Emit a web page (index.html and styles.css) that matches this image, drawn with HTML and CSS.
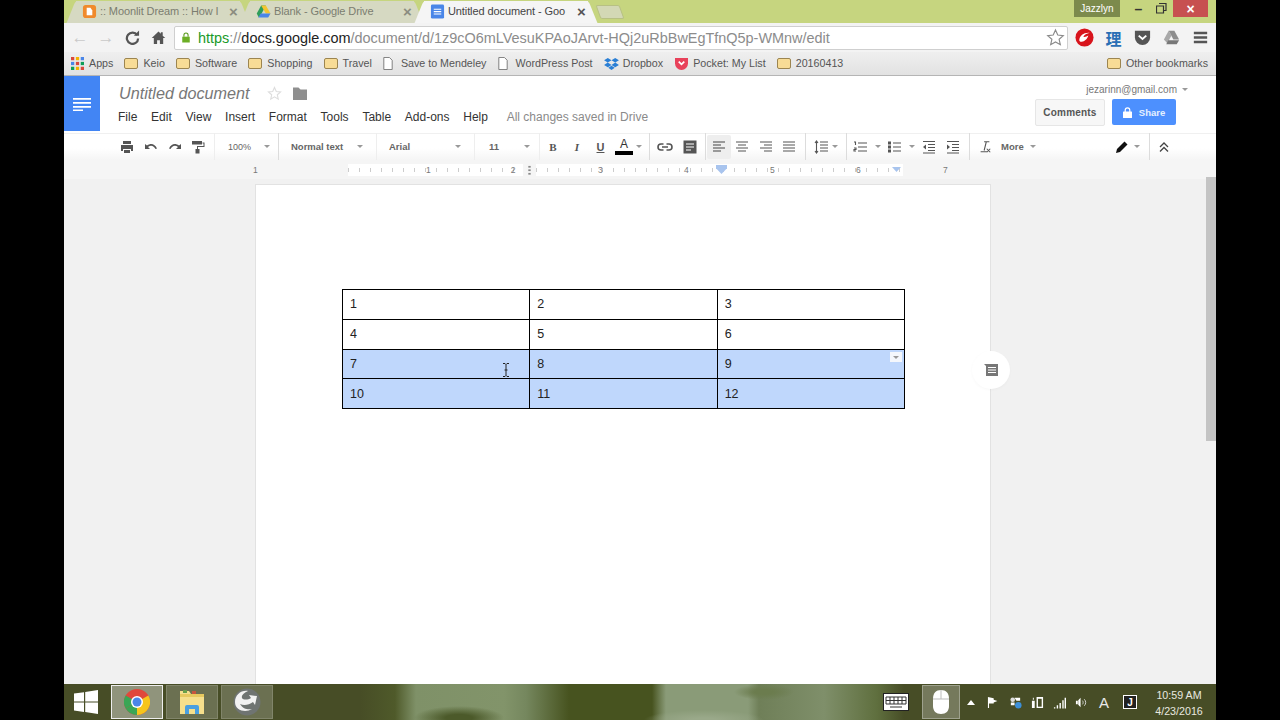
FILE: index.html
```html
<!DOCTYPE html>
<html lang="en">
<head>
<meta charset="utf-8">
<title>Untitled document - Google Docs</title>
<link rel="stylesheet" href="styles.css">
</head>
<body>
<div class="screen">
  <div class="tabstrip">
    <div class="tab">
      <svg class="ico16" viewBox="0 0 16 16"><rect x="1" y="1" width="14" height="14" rx="3" fill="#f08a2c"/><path d="M5 4h4l2 3v5H5z" fill="#fff"/></svg>
      <span class="tabtext">:: Moonlit Dream :: How I</span><span class="tabx">×</span>
    </div>
    <div class="tab">
      <svg class="ico16" viewBox="0 0 16 16"><path d="M5.500 1.500h5L6 10 3 14.500 0.800 10z" fill="#2f9e5a"/><path d="M5.500 1.500h5l5 8.500h-5z" fill="#f4c430"/><path d="M5 10h10.500l-2.500 4.500H2.500z" fill="#4a86e8"/></svg>
      <span class="tabtext">Blank - Google Drive</span><span class="tabx">×</span>
    </div>
    <div class="tab active">
      <svg class="ico16" viewBox="0 0 16 16"><rect x="1" y="0.500" width="14" height="15" rx="1.500" fill="#4a86e8"/><path d="M4 5h8v1.200H4zM4 7.500h8v1.200H4zM4 10h8v1.200H4z" fill="#fff"/></svg>
      <span class="tabtext">Untitled document - Goo</span><span class="tabx dark">×</span>
    </div>
    <div class="newtab"></div>
    <div class="winctl">
      <span class="user">Jazzlyn</span>
      <span class="wbtn">–</span>
      <span class="wbtn"><svg width="11" height="11" viewBox="0 0 11 11"><path d="M3 .5h7v7H8M.5 3h7v7h-7z" fill="none" stroke="#333" stroke-width="1.200"/></svg></span>
      <span class="wbtn close">×</span>
    </div>
  </div>

  <div class="navbar">
    <span class="nav faint">←</span>
    <span class="nav faint">→</span>
    <svg class="navi" viewBox="0 0 16 16"><path d="M13 5.500A6 6 0 1 0 14 9" fill="none" stroke="#555" stroke-width="2.400"/><path d="M9.500 6H15V.5z" fill="#555"/></svg>
    <svg class="navi" viewBox="0 0 16 16"><path d="M8 1.500 0.800 8.500H3V15h3.500v-4h3v4H13V8.500h2.200L12.500 6V2.500h-2v1.600z" fill="#555"/></svg>
    <div class="omni">
      <svg class="lock" viewBox="0 0 12 14"><path d="M3.500 6V4a2.500 2.500 0 0 1 5 0v2" fill="none" stroke="#5b9a1f" stroke-width="1.300"/><rect x="1.500" y="6" width="9" height="7" fill="#6cae25"/></svg>
      <span class="url"><span class="https">https</span><span class="muted">://</span>docs.google.com<span class="muted">/document/d/1z9cO6mLVesuKPAoJArvt-HQj2uRbBwEgTfnQ5p-WMnw/edit</span></span>
      <svg class="star" viewBox="0 0 20 20"><path d="M10 2l2.400 5.400 5.800.6-4.400 3.900 1.300 5.700L10 14.700l-5.100 2.900 1.300-5.700L1.800 8l5.800-.6z" fill="#fff" stroke="#8a8a8a" stroke-width="1.200"/></svg>
    </div>
    <div class="exts">
      <svg class="ext" viewBox="0 0 20 20"><circle cx="10" cy="10" r="9.500" fill="#d8141c"/><path d="M4.500 12.500C5 8 9 4.500 15.500 5c-3 .8-6 2.300-6.800 4.300 1.800.5 3.800-.3 5.300-1.300-.8 3.700-4.500 7-7.500 6.500-1.200-.2-2-1-2-2z" fill="#fff"/></svg>
      <span class="kanji">理</span>
      <svg class="ext" viewBox="0 0 20 20"><path d="M2 3h16v7a8 8 0 0 1-16 0z" fill="#555"/><path d="M6 8l4 3.500L14 8" fill="none" stroke="#fff" stroke-width="2"/></svg>
      <svg class="ext" viewBox="0 0 20 20"><path d="M7 3h6l5 9h-6z" fill="#8d8d8d"/><path d="M7 3l3 5-4.500 8L2 12z" fill="#a8a8a8"/><path d="M6.500 13H18l-2.500 4H4.500z" fill="#777"/></svg>
      <svg class="ext" viewBox="0 0 20 20"><path d="M3 4h14v2.600H3zM3 8.700h14v2.600H3zM3 13.400h14V16H3z" fill="#555"/></svg>
    </div>
  </div>

  <div class="bookmarks">
    <span class="bm"><svg class="ico14" viewBox="0 0 12 12"><g><rect x="0" y="0" width="3" height="3" fill="#d9483b"/><rect x="4.500" y="0" width="3" height="3" fill="#f4b400"/><rect x="9" y="0" width="3" height="3" fill="#4a86e8"/><rect x="0" y="4.500" width="3" height="3" fill="#4a86e8"/><rect x="4.500" y="4.500" width="3" height="3" fill="#d9483b"/><rect x="9" y="4.500" width="3" height="3" fill="#0f9d58"/><rect x="0" y="9" width="3" height="3" fill="#0f9d58"/><rect x="4.500" y="9" width="3" height="3" fill="#f4b400"/><rect x="9" y="9" width="3" height="3" fill="#d9483b"/></g></svg>Apps</span>
    <span class="bm"><i class="folder"></i>Keio</span>
    <span class="bm"><i class="folder"></i>Software</span>
    <span class="bm"><i class="folder"></i>Shopping</span>
    <span class="bm"><i class="folder"></i>Travel</span>
    <span class="bm"><svg class="pageic" viewBox="0 0 10 14"><path d="M.5.500h6l3 3v10H.5z" fill="#fff" stroke="#777"/></svg>Save to Mendeley</span>
    <span class="bm"><svg class="pageic" viewBox="0 0 10 14"><path d="M.5.500h6l3 3v10H.5z" fill="#fff" stroke="#777"/></svg>WordPress Post</span>
    <span class="bm"><svg class="ico14 wide" viewBox="0 0 16 14"><path d="M4 1l4 2.500L4 6 0 3.500zM12 1l4 2.500L12 6 8 3.500zM4 6l4 2.500L4 11 0 8.500zM12 6l4 2.500L12 11 8 8.500zM4.500 11.500 8 9.500l3.500 2L8 14z" fill="#2a7fd5"/></svg>Dropbox</span>
    <span class="bm"><svg class="ico14 wide" viewBox="0 0 16 14"><path d="M1 1h14v6a7 7 0 0 1-14 0z" fill="#e8415a"/><path d="M5 5l3 3 3-3" fill="none" stroke="#fff" stroke-width="1.800"/></svg>Pocket: My List</span>
    <span class="bm"><i class="folder"></i>20160413</span>
    <span class="bm other"><i class="folder"></i>Other bookmarks</span>
  </div>

  <div class="docs">
    <header class="dochead">
      <div class="logo"><svg width="18" height="14" viewBox="0 0 18 14"><path d="M0 1h18v1.800H0zM0 5h18v1.800H0zM0 9h18v1.800H0zM0 12.600h10V14H0z" fill="#fff"/></svg></div>
      <div class="titles">
        <div class="titlerow">
          <span class="doctitle">Untitled document</span>
          <svg class="tstar" viewBox="0 0 16 16"><path d="M8 1.500l1.900 4.300 4.600.5-3.500 3.100 1 4.600L8 11.600l-4 2.400 1-4.600-3.500-3.100 4.600-.5z" fill="none" stroke="#ddd" stroke-width="1.200"/></svg>
          <svg class="tfolder" viewBox="0 0 14 13"><path d="M0 .5h5.500L7.500 2.500H14V13H0z" fill="#8f8f8f"/></svg>
        </div>
        <nav class="menu">
          <span>File</span><span>Edit</span><span>View</span><span>Insert</span><span>Format</span><span>Tools</span><span>Table</span><span>Add-ons</span><span>Help</span>
          <span class="saved">All changes saved in Drive</span>
        </nav>
      </div>
      <div class="acct">
        <div class="email">jezarinn@gmail.com <i class="caret"></i></div>
        <div class="btns">
          <span class="comments">Comments</span>
          <span class="share"><svg width="9" height="11" viewBox="0 0 9 11"><path d="M2.200 5V3.200a2.300 2.300 0 0 1 4.600 0V5" fill="none" stroke="#fff" stroke-width="1.200"/><rect y="4.500" width="9" height="6.500" rx=".5" fill="#fff"/></svg>Share</span>
        </div>
      </div>
    </header>

    <div class="toolbar">
      <svg class="tb" viewBox="0 0 14 14"><path d="M3 1h8v3H3zM1 5h12v6h-2V9H3v2H1zM4 10h6v3H4z" fill="#555"/></svg>
      <svg class="tb ml10" viewBox="0 0 14 14"><path d="M1 4v5h5L4 7c3-2.500 6-1 7.500 2l1.500-.5C11 4 7 2.500 3 5.500z" fill="#555"/></svg>
      <svg class="tb ml10" viewBox="0 0 14 14"><path d="M13 4v5H8l2-2C7 4.500 4 6 2.500 9L1 8.500C3 4 7 2.500 11 5.500z" fill="#555"/></svg>
      <svg class="tb ml9" viewBox="0 0 14 14"><path d="M1 1h10v3.500H1zM11.500 2.500H13.500V7H7v2H8.500v4.500h-4V9H6V6h6.500V3.500h-1z" fill="#555"/></svg>
      <i class="sep ml9 faint"></i>
      <span class="sel zoom">100%<i class="caret"></i></span>
      <i class="sep"></i>
      <span class="sel stylebox">Normal text<i class="caret"></i></span>
      <i class="sep faint"></i>
      <span class="sel fontbox">Arial<i class="caret"></i></span>
      <i class="sep faint"></i>
      <span class="sel sizebox">11<i class="caret"></i></span>
      <i class="sep faint"></i>
      <span class="fmt b ml1">B</span><span class="fmt it">I</span><span class="fmt u">U</span>
      <span class="fmt color">A<i class="colorbar"></i></span><i class="caret ml1"></i>
      <i class="sep ml7"></i>
      <svg class="tb link ml7" viewBox="0 0 16 14"><path d="M6.500 4H4a3 3 0 0 0 0 6h2.500M9.500 4H12a3 3 0 0 1 0 6H9.500M5 7h6" fill="none" stroke="#555" stroke-width="1.600"/></svg>
      <svg class="tb ml10" viewBox="0 0 14 14"><path d="M.5.500h13v13H.5z" fill="#555"/><path d="M3 4h8M3 7h8M3 10h5" stroke="#fff" stroke-width="1.200"/></svg>
      <i class="sep ml8"></i>
      <span class="alignbtn on ml1"><svg class="tb" viewBox="0 0 14 14"><path d="M1 2h12M1 5h8M1 8h12M1 11h8" stroke="#444" stroke-width="1.200"/></svg></span>
      <span class="alignbtn"><svg class="tb" viewBox="0 0 14 14"><path d="M1 2h12M3 5h8M1 8h12M3 11h8" stroke="#555" stroke-width="1.200"/></svg></span>
      <span class="alignbtn"><svg class="tb" viewBox="0 0 14 14"><path d="M1 2h12M5 5h8M1 8h12M5 11h8" stroke="#555" stroke-width="1.200"/></svg></span>
      <span class="alignbtn"><svg class="tb" viewBox="0 0 14 14"><path d="M1 2h12M1 5h12M1 8h12M1 11h12" stroke="#555" stroke-width="1.200"/></svg></span>
      <i class="sep ml4"></i>
      <svg class="tb ml8" viewBox="0 0 14 14"><path d="M2.500 1v12M1 3l1.500-2L4 3M1 11l1.500 2L4 11M6 2h8M6 5h8M6 8h8M6 11h8" fill="none" stroke="#555" stroke-width="1.100"/></svg><i class="caret ml4"></i>
      <i class="sep ml8"></i>
      <svg class="tb ml6" viewBox="0 0 14 14"><path d="M1 2h1.500v3M1 8h2v1.500H1V11h2M5 3h9M5 7h9M5 11h9" fill="none" stroke="#555" stroke-width="1.100"/></svg><i class="caret ml8"></i>
      <svg class="tb ml6" viewBox="0 0 14 14"><path d="M1 1.500h3v3H1zM1 5.500h3v3H1zM1 9.500h3v3H1z" fill="#555"/><path d="M6 3h8M6 7h8M6 11h8" stroke="#555" stroke-width="1.100"/></svg><i class="caret ml8"></i>
      <svg class="tb ml7" viewBox="0 0 14 14"><path d="M1 1.500h12M6 4.500h7M6 7.500h7M6 10.500h7M1 13h12" stroke="#555" stroke-width="1.100"/><path d="M4 4.500v5L1 7z" fill="#555"/></svg>
      <svg class="tb ml10" viewBox="0 0 14 14"><path d="M1 1.500h12M6 4.500h7M6 7.500h7M6 10.500h7M1 13h12" stroke="#555" stroke-width="1.100"/><path d="M1 4.500v5L4 7z" fill="#555"/></svg>
      <i class="sep ml9"></i>
      <svg class="tb ml8" viewBox="0 0 16 14"><path d="M7 1h6M9.500 1 7 11M3 12.500h7M10 9l4 4M14 9l-4 4" fill="none" stroke="#555" stroke-width="1.200"/></svg>
      <span class="sel more ml9">More<i class="caret"></i></span>
      <span class="grow"></span>
      <svg class="tb" viewBox="0 0 14 14"><path d="M1 13l1-4 7.500-7.500 3 3L5 12z" fill="#111"/></svg><i class="caret ml5"></i>
      <i class="sep ml9"></i>
      <svg class="tb chev ml8" viewBox="0 0 12 12"><path d="M2 6l4-4 4 4M2 10.500l4-4 4 4" fill="none" stroke="#444" stroke-width="1.300"/></svg>
    </div>

    <div class="ruler">
      <span class="rn outer">1</span>
      <div class="rstrip a"><span>1</span><span>2</span></div>
      <i class="rdots"></i>
      <div class="rstrip b"><span>3</span><span>4</span><i class="indent"></i><span>5</span><span>6</span><i class="rmark"></i></div>
      <span class="rn seven">7</span>
    </div>

    <div class="canvas">
      <main class="page">
        <table class="grid">
          <tr><td>1</td><td>2</td><td>3</td></tr>
          <tr><td>4</td><td>5</td><td>6</td></tr>
          <tr class="hl"><td>7</td><td>8</td><td>9</td></tr>
          <tr class="hl"><td>10</td><td>11</td><td>12</td></tr>
        </table>
      </main>
      <div class="scroll"><div class="thumb"></div></div>
      <svg class="ibeam" viewBox="0 0 8 14"><path d="M1 .5h2l1 1 1-1h2M4 1.500v11M1 13.500h2l1-1 1 1h2M2.500 7h3" fill="none" stroke="#222"/></svg>
      <span class="celltag"><i class="caret"></i></span>
      <div class="bubble"><svg width="14" height="12" viewBox="0 0 14 12"><path d="M0 0h14v12H2V2z" fill="#777"/><path d="M4 3.500h8M4 6h8M4 8.500h8" stroke="#fff"/></svg></div>
    </div>
  </div>

  <footer class="taskbar">
    <svg class="win" viewBox="0 0 24 24"><path d="M0 3.600 10 2.200v9.200H0zM11.200 2 24 0v11.400H11.200zM0 12.600h10v9.300L0 20.400zM11.200 12.600H24V24l-12.800-1.900z" fill="#fff"/></svg>
    <div class="tbtn active"><svg width="26" height="26" viewBox="0 0 26 26"><circle cx="13" cy="13" r="13" fill="#e0483b"/><path d="M13 13 1.700 19.500A13 13 0 0 0 13 26z" fill="#3aa655"/><path d="M13 13V26A13 13 0 0 0 24.300 6.500z" fill="#f6c51c"/><path d="M13 13 1.700 19.500A13 13 0 0 1 1.700 6.500z" fill="#3aa655"/><circle cx="13" cy="13" r="6" fill="#fff"/><circle cx="13" cy="13" r="4.500" fill="#4a86e8"/></svg></div>
    <div class="tbtn"><svg width="30" height="28" viewBox="0 0 30 28"><path d="M3 3h9l2 3h13v20H3z" fill="#f6df8c"/><path d="M3 6h24v3H3z" fill="#e7c95f"/><rect x="6" y="2" width="4" height="3" fill="#6aa04a"/><rect x="15" y="3" width="4" height="3" fill="#c8553d"/><path d="M8 26v-7a2 2 0 0 1 2-2h10a2 2 0 0 1 2 2v7h-4v-5h-6v5z" fill="#4a9fe0"/></svg></div>
    <div class="tbtn"><svg width="28" height="28" viewBox="0 0 28 28"><circle cx="14" cy="14" r="13.500" fill="#6f7472"/><path d="M2 14C2 7 8 2 15 3c-4 2-7 4-6 7 1 2 6 2 9 0l-2-3 8 1-2 9-2-3c-4 3-9 4-13 2 3 5 8 6 12 5-6 4-17 2-17-7z" fill="#f2f2f2"/></svg></div>
    <span class="grow"></span>
    <svg class="kbd" width="26" height="18" viewBox="0 0 26 18"><rect x=".5" y=".5" width="25" height="17" fill="#fff" stroke="#222"/><path d="M3 4h20v7H3zM3 7.500h20M7 4v7M11 4v7M15 4v7M19 4v7M7 14h12" fill="none" stroke="#333"/></svg>
    <div class="mouse"><svg width="16" height="24" viewBox="0 0 16 24"><path d="M8 0c5 0 8 3 8 9v7c0 5-3 8-8 8s-8-3-8-8V9c0-6 3-9 8-9z" fill="#fff"/><path d="M0 9h16M8 0v9" stroke="#bbb"/></svg></div>
    <div class="tray">
      <svg class="tr up" viewBox="0 0 8 5"><path d="M4 0l4 5H0z" fill="#fff"/></svg>
      <svg class="tr" viewBox="0 0 14 14"><path d="M1 1v12h1.200V8h5V7l4-1.500L7.200 4V2.500z" fill="#fff"/></svg>
      <svg class="tr" viewBox="0 0 14 14"><circle cx="4" cy="4" r="2.500" fill="#ddd"/><circle cx="10" cy="10" r="3.500" fill="#3c8fd8"/><path d="M6 2h6v3H8zM2 7h4v3H2z" fill="#fff"/></svg>
      <svg class="tr" viewBox="0 0 14 14"><path d="M6 1h7v12H6zM1 5h3v8H1zM2 2h1v2H2z" fill="#fff"/><path d="M7.500 3h4v8.500h-4z" fill="#474d26"/></svg>
      <svg class="tr" viewBox="0 0 14 14"><path d="M1 12h1.500v1.500H1zM4 10h1.500v3.500H4zM7 7.500h1.500v6H7zM10 4.500h1.500v9H10zM12.500 2H14v11.500h-1.500z" fill="#fff"/></svg>
      <svg class="tr" viewBox="0 0 14 14"><path d="M1 5h2v4H1zM3.500 4.500 6 2v10L3.500 9.500z" fill="#fff"/><path d="M8 5c1 1 1 3 0 4M10 3.500c2 2 2 5 0 7" fill="none" stroke="#ddd"/></svg>
      <span class="ime">A</span>
      <span class="jbox">J</span>
    </div>
    <div class="clock"><span>10:59 AM</span><span>4/23/2016</span></div>
  </footer>
</div>
</body>
</html>
```

FILE: styles.css
```css
* { box-sizing: border-box; }
html, body { margin: 0; height: 100%; background: #000; overflow: hidden; }
body { font-family: "Liberation Sans", Arial, sans-serif; display: flex; justify-content: center; }
i { display: block; }

.screen { width: 1152px; height: 720px; display: flex; flex-direction: column; background: #fff; position: relative; overflow: hidden; }

/* Tabs */
.tabstrip { height: 23px; flex: none; background: #c6d57f; display: flex; align-items: flex-end; padding-left: 12px; }
.tab { width: 164px; height: 22px; background: #d6d9c2; margin-right: 10px; display: flex; align-items: center; padding: 0 0 2px 6px; font-size: 11px; color: #7b7d70; position: relative; flex: none; }
.tab::before, .tab::after { content: ""; position: absolute; top: 0; bottom: 0; width: 11px; background: inherit; }
.tab::before { left: -5px; transform: skewX(-22deg); border-radius: 3px 0 0 0; }
.tab::after { right: -5px; transform: skewX(22deg); border-radius: 0 3px 0 0; }
.tab.active { background: #f5f5f5; color: #444; z-index: 2; }
.ico16 { width: 15px; height: 15px; flex: none; margin-right: 3px; position: relative; z-index: 1; }
.tabtext { flex: 1; white-space: nowrap; overflow: hidden; position: relative; z-index: 1; letter-spacing: -.1px; }
.tabx { width: 13px; text-align: center; font-size: 15px; color: #8b8d80; font-weight: 700; line-height: 1; position: relative; z-index: 1; flex: none; }
.tabx.dark { color: #555; }
.newtab { width: 24px; height: 14px; background: #d3d8b5; margin-bottom: 4px; transform: skewX(20deg); border-radius: 2px; border: 1px solid #b7c084; }
.winctl { margin-left: auto; align-self: flex-start; display: flex; align-items: stretch; height: 17px; margin-right: 8px; }
.user { width: 46px; background: #7c8a4c; color: #fff; font-size: 10px; display: flex; align-items: center; justify-content: center; margin-right: 7px; }
.wbtn { width: 23px; display: flex; align-items: center; justify-content: center; color: #333; font-size: 14px; font-weight: 700; }
.wbtn.close { width: 35px; background: #c75050; color: #fff; }

/* Nav */
.navbar { height: 29px; flex: none; background: #f3f3f3; display: flex; align-items: center; padding-left: 3px; }
.nav { width: 26px; text-align: center; font-size: 17px; color: #555; font-weight: 700; line-height: 1; }
.nav.faint { color: #c9c9c9; }
.navi { width: 15px; height: 15px; margin-left: 6px; margin-right: 5px; flex: none; }
.omni { height: 24px; width: 894px; margin-left: 3px; background: #fff; border: 1px solid #cfcfcf; border-radius: 2px; display: flex; align-items: center; padding: 0 2px 0 6px; flex: none; }
.lock { width: 10px; height: 13px; margin-right: 7px; flex: none; }
.url { font-size: 14.450px; color: #222; flex: 1; white-space: nowrap; }
.https { color: #1a9a2a; }
.muted { color: #8c8c8c; }
.star { width: 19px; height: 19px; flex: none; }
.exts { display: flex; align-items: center; margin-left: 7px; gap: 10px; }
.ext { width: 19px; height: 19px; flex: none; }
.kanji { width: 19px; text-align: center; font-family: "Noto Sans CJK SC", sans-serif; font-size: 16px; line-height: 1; color: #2a6fb5; font-weight: 700; }

/* Bookmarks */
.bookmarks { height: 24px; flex: none; background: linear-gradient(#efefef, #e2e2e2); border-bottom: 1px solid #b5b5b5; display: flex; align-items: center; padding: 0 8px 1px 7px; font-size: 10.700px; color: #555; }
.bm { display: flex; align-items: center; margin-right: 11.100px; white-space: nowrap; }
.bm.other { margin-left: auto; margin-right: 0; }
.ico14 { width: 13px; height: 13px; margin-right: 5px; flex: none; }
.ico14.wide { width: 15px; margin-right: 4px; }
.pageic { width: 10px; height: 13px; margin-right: 8px; flex: none; }
.folder { width: 14px; height: 11px; background: #f8dc96; border: 1px solid #9c8550; border-radius: 2px; margin-right: 5px; }

/* Docs */
.docs { flex: 1; display: flex; flex-direction: column; min-height: 0; position: relative; }
.dochead { height: 57px; flex: none; display: flex; background: #fff; }
.logo { width: 36px; height: 55px; background: #4285f4; display: flex; align-items: center; justify-content: center; flex: none; }
.titles { margin-left: 18px; flex: 1; }
.titlerow { display: flex; align-items: center; height: 34px; }
.doctitle { font-size: 16.200px; font-style: italic; color: #777; margin-left: 1px; }
.tstar { width: 15px; height: 15px; margin-left: 18px; }
.tfolder { width: 14px; height: 13px; margin-left: 11px; }
.menu { display: flex; align-items: center; font-size: 12px; color: #333; height: 14px; }
.menu span { margin-right: 13.750px; }
.menu .saved { color: #8a8a8a; margin-left: 5px; }
.acct { width: 140px; margin-right: 40px; display: flex; flex-direction: column; align-items: flex-end; padding-top: 7px; flex: none; }
.email { font-size: 10px; color: #777; display: flex; align-items: center; margin-right: -12px; white-space: nowrap; height: 13px; gap: 5px; }
.btns { display: flex; gap: 7px; margin-top: 3px; }
.comments { height: 27px; width: 70px; background: #f7f7f7; border: 1px solid #e6e6e6; border-radius: 2px; font-size: 10px; font-weight: 700; color: #555; display: flex; align-items: center; justify-content: center; letter-spacing: .2px; }
.share { height: 26px; width: 64px; background: #4d90fe; border-radius: 2px; color: #e6f0ff; font-size: 9.500px; font-weight: 700; display: flex; align-items: center; justify-content: center; gap: 7px; }

.caret { width: 0; height: 0; border-left: 3px solid transparent; border-right: 3px solid transparent; border-top: 3px solid #999; flex: none; }

/* Toolbar: small left margins tune the spacing of the icon groups */
.toolbar { height: 27px; flex: none; display: flex; align-items: center; padding: 0 46px 1px 56px; font-size: 9.500px; color: #555; background: linear-gradient(#fff 0, #fff 55%, #f5f5f5 100%); border-top: 1px solid #f0f0f0; }
.ml1 { margin-left: 1px; }
.ml4 { margin-left: 4px; }
.ml5 { margin-left: 5px; }
.ml6 { margin-left: 6px; }
.ml7 { margin-left: 7px; }
.ml8 { margin-left: 8px; }
.ml9 { margin-left: 9px; }
.ml10 { margin-left: 10px; }
.tb { width: 14px; height: 14px; flex: none; }
.tb.link { width: 16px; }
.tb.chev { width: 12px; height: 12px; }
.sep { width: 1px; height: 27px; background: #dcdcdc; flex: none; }
.sep.faint { background: #eee; }
.sel { display: flex; align-items: center; justify-content: space-between; font-weight: 700; white-space: nowrap; flex: none; color: #666; }
.zoom { width: 63px; font-weight: 400; padding: 0 8px 0 13px; font-size: 9px; }
.stylebox { width: 97px; padding: 0 13px 0 12px; }
.fontbox { width: 97px; padding: 0 13px 0 12px; }
.sizebox { width: 64px; padding: 0 9px 0 14px; }
.more { width: 35px; }
.fmt { width: 24px; text-align: center; font-size: 11px; font-weight: 700; color: #555; flex: none; font-family: "Liberation Serif", serif; }
.fmt.it { font-style: italic; }
.fmt.u { text-decoration: underline; font-family: "Liberation Sans", sans-serif; width: 23px; }
.fmt.color { font-family: "Liberation Sans", sans-serif; font-weight: 400; color: #333; display: flex; flex-direction: column; align-items: center; line-height: 10px; font-size: 12px; width: 22px; margin-left: 1px; }
.colorbar { width: 18px; height: 4px; background: #000; margin-top: 2px; }
.alignbtn { width: 23.500px; height: 24px; display: flex; align-items: center; justify-content: center; flex: none; }
.alignbtn.on { background: #eee; border-radius: 2px; }
.grow { flex: 1; }

/* Ruler */
.ruler { height: 19px; flex: none; background: #f5f5f5; display: flex; align-items: center; font-size: 8.500px; color: #777; padding-left: 189px; }
.rn { width: 95px; flex: none; }
.rstrip { height: 12px; background: #fff; display: flex; align-items: center; flex: none; background-image: repeating-linear-gradient(90deg, #ccc 0 1px, transparent 1px 11px); background-size: 100% 4px; background-repeat: no-repeat; background-position: 0 4px; }
.rstrip.a { width: 175px; padding-left: 78px; gap: 80px; }
.rdots { width: 13px; height: 10px; flex: none; background: radial-gradient(circle, #888 0 1px, transparent 1.300px) center top / 3px 3.500px repeat-y; }
.rstrip.b { width: 367px; padding-left: 62px; }
.rstrip.b span { width: 86px; flex: none; }
.rstrip.b span:nth-child(2) { width: 32px; }
.indent { width: 11px; height: 9px; background: #a8c4ee; margin-right: 43px; flex: none; clip-path: polygon(0 0, 100% 0, 100% 35%, 50% 100%, 0 35%); }
.rmark { width: 9px; height: 5px; background: #a8c4ee; margin-left: -50px; flex: none; clip-path: polygon(0 0, 100% 0, 50% 100%); }
.seven { padding-left: 40px; }

/* Canvas */
.canvas { flex: 1; background: #f1f1f1; display: flex; min-height: 0; position: relative; padding: 5px 0 0 191px; }
.page { width: 736px; height: 600px; background: #fff; border: 1px solid #e2e2e2; padding: 104px 85px 0 86px; flex: none; }
.grid { width: 563px; border-collapse: collapse; table-layout: fixed; font-size: 12.500px; color: #222; }
.grid td { border: 1px solid #000; height: 29.750px; padding: 0 7px; }
.hl td { background: #bfd7fc; }
.scroll { position: absolute; right: 0; top: -2px; bottom: 0; width: 10px; background: #f1f1f1; }
.thumb { height: 264px; background: #c4c4c4; }
.ibeam { position: absolute; left: 438px; top: 184px; width: 8px; height: 14px; }
.celltag { position: absolute; left: 826px; top: 173px; width: 12px; height: 10px; background: #f4f7fc; display: flex; align-items: center; justify-content: center; }
.bubble { position: absolute; left: 908px; top: 172px; width: 38px; height: 38px; border-radius: 50%; background: #fff; box-shadow: 0 1px 3px rgba(0,0,0,.03); display: flex; align-items: center; justify-content: center; }

/* Taskbar: the wallpaper shows through, dark and pale bands of a landscape */
.taskbar { position: absolute; left: 0; right: 0; bottom: 0; height: 36px; display: flex; align-items: center;
  background:
    radial-gradient(ellipse 45px 12px at 395px 34px, #4c5a2a 30%, transparent),
    radial-gradient(ellipse 60px 10px at 640px 36px, #9aa98a 20%, transparent),
    radial-gradient(ellipse 30px 8px at 700px 8px, #6b7c4e 30%, transparent),
    linear-gradient(90deg, #474d26 0, #474d26 296px, #4f5a2a 331px, #7f9168 352px, #82946a 440px, #75875e 462px, #47531f 505px, #47531f 588px, #8a9b78 602px, #8a9b78 684px, #6f7f58 695px, #7f8f6a 760px, #5f6f3e 813px, #474d26 840px, #474d26 100%); }
.win { width: 24px; height: 24px; margin: 0 13px 0 10px; flex: none; }
.tbtn { width: 52px; height: 34px; background: rgba(255,255,255,.2); border: 1px solid rgba(255,255,255,.15); margin-right: 3px; display: flex; align-items: center; justify-content: center; flex: none; }
.tbtn.active { background: rgba(255,255,255,.4); border: 1px solid #eee; }
.kbd { flex: none; margin-right: 13px; }
.mouse { width: 38px; height: 34px; background: rgba(255,255,255,.25); border: 1px solid rgba(255,255,255,.3); display: flex; align-items: center; justify-content: center; flex: none; margin-right: 7px; }
.tray { display: flex; align-items: center; gap: 9px; color: #fff; flex: none; }
.tr { width: 13px; height: 13px; flex: none; }
.tr.up { width: 8px; height: 5px; margin-right: 2.500px; }
.ime { font-size: 15px; color: #e8e8e8; margin-left: 2px; line-height: 1; }
.jbox { width: 14px; height: 14px; background: #222; border: 1px solid #fff; color: #fff; font-size: 10px; font-weight: 700; display: flex; align-items: center; justify-content: center; margin-left: 5px; }
.clock { display: flex; flex-direction: column; align-items: center; width: 64px; margin-left: 10px; margin-right: 5px; padding-top: 2px; font-size: 10.700px; color: #e9e9e0; line-height: 16px; flex: none; }
```
